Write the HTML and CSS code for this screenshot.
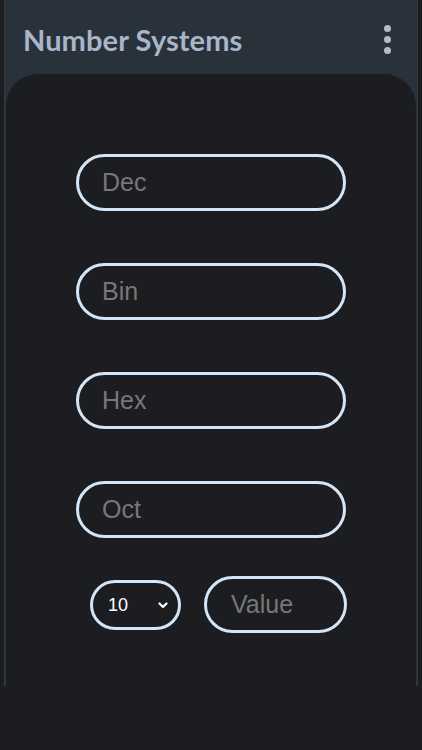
FILE: index.html
```html
<!DOCTYPE html>
<html lang="en">
<head>
<meta charset="utf-8">
<title>Number Systems</title>
<link rel="stylesheet" href="styles.css">
</head>
<body>
<div class="frame">
  <header class="appbar">
    <h1 class="title">Number Systems</h1>
    <div class="menu" aria-label="More">
      <span class="dot"></span><span class="dot"></span><span class="dot"></span>
    </div>
  </header>
  <main class="panel">
    <div class="fields">
      <input class="field" type="text" placeholder="Dec">
      <input class="field" type="text" placeholder="Bin">
      <input class="field" type="text" placeholder="Hex">
      <input class="field" type="text" placeholder="Oct">
    </div>
    <div class="convert">
      <div class="select">
        <span class="select-value">10</span>
        <svg class="chev" width="10" height="7" viewBox="0 0 10 7"><path d="M1.5 1.5 L5 5 L8.5 1.5" fill="none" stroke="#ffffff" stroke-width="2.2" stroke-linecap="round" stroke-linejoin="round"/></svg>
      </div>
      <input class="value" type="text" placeholder="Value">
    </div>
  </main>
</div>
</body>
</html>
```
FILE: styles.css
```css
* { box-sizing: border-box; }
html, body {
  margin: 0;
  padding: 0;
  background: #1c1d20;
  width: 422px;
  height: 750px;
  overflow: hidden;
}
.frame {
  margin: 0 4px;
  height: 686px;
  background: #29323a;
  display: flex;
  flex-direction: column;
  border-left: 1px solid #323b44;
  border-right: 1px solid #323b44;
}
.appbar {
  height: 74px;
  display: flex;
  align-items: center;
  justify-content: space-between;
  padding: 4px 26px 0 18px;
}
.title {
  margin: 0;
  font-family: Lato, "Noto Sans", sans-serif;
  font-weight: 700;
  font-size: 29px;
  letter-spacing: 0.1px;
  color: #a8b6c9;
}
.menu {
  display: flex;
  flex-direction: column;
  gap: 4px;
}
.dot {
  width: 7px;
  height: 7px;
  border-radius: 50%;
  background: #b2bccb;
}
.panel {
  flex: 1;
  margin: 0 1px;
  background: #1c1d21;
  border-radius: 32px 32px 0 0;
  display: flex;
  flex-direction: column;
  align-items: center;
  padding-top: 80px;
}
.fields {
  display: flex;
  flex-direction: column;
  gap: 52px;
}
.field, .value {
  width: 270px;
  height: 57px;
  border: 3px solid #d3e6f7;
  border-radius: 30px;
  background: transparent;
  padding: 0 0 0 23px;
  font-family: "Liberation Sans", Arial, sans-serif;
  font-size: 25px;
  color: #ffffff;
  outline: none;
}
.field::placeholder, .value::placeholder {
  color: #777777;
}
.convert {
  display: flex;
  align-items: center;
  gap: 23px;
  margin-top: 38px;
  padding-left: 15px;
}
.select {
  width: 91px;
  height: 50px;
  border: 3px solid #d3e6f7;
  border-radius: 25px;
  display: flex;
  align-items: center;
  justify-content: space-between;
  padding: 2px 10px 0 15px;
}
.select-value {
  font-family: "Liberation Sans", Arial, sans-serif;
  font-size: 18px;
  color: #ffffff;
}
.value {
  width: 143px;
  height: 57px;
  padding-left: 24px;
}
```
